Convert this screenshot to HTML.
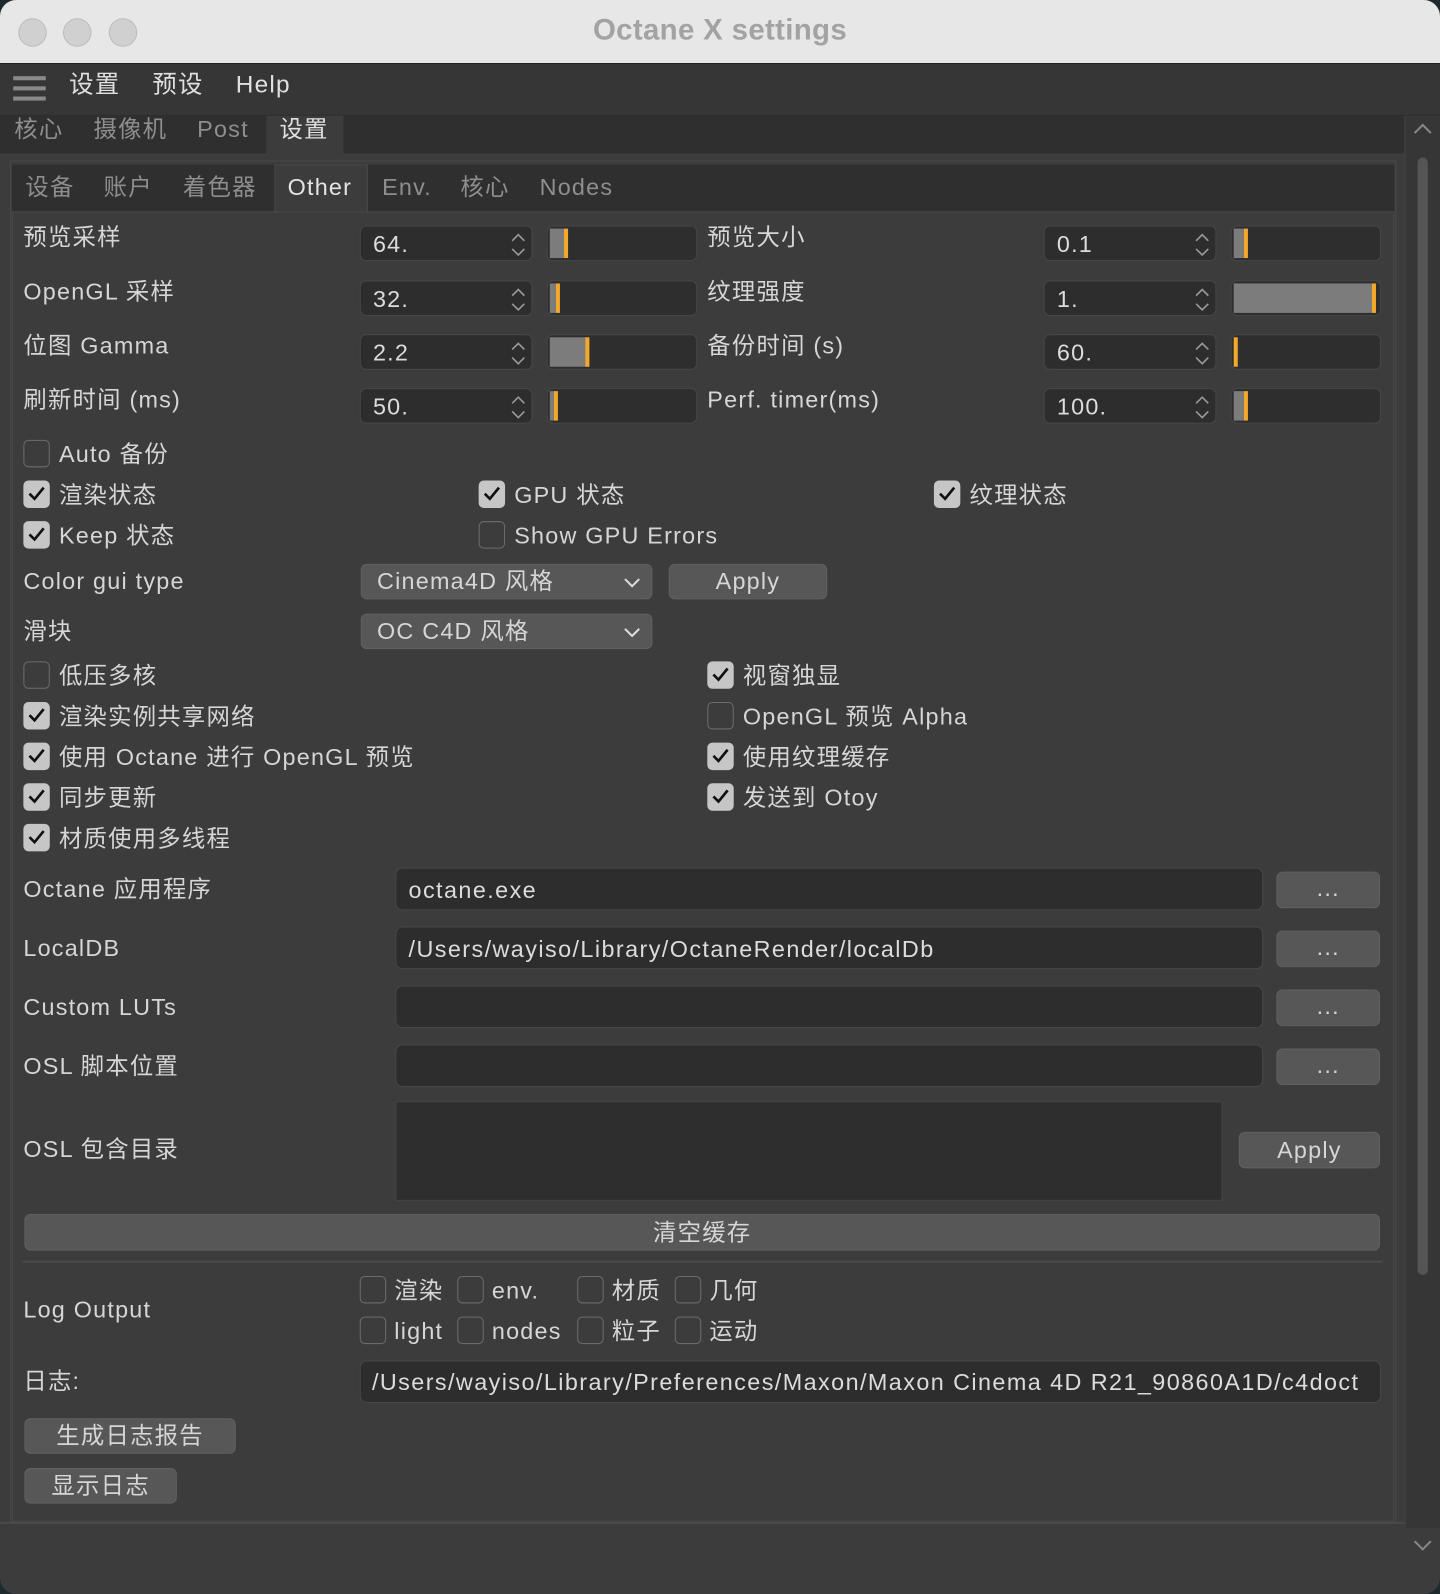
<!DOCTYPE html>
<html><head><meta charset="utf-8">
<style>
html,body{margin:0;padding:0;background:#1e2a2e;width:1440px;height:1594px;overflow:hidden}
#w{position:absolute;left:0;top:0;width:1417px;height:1569px;transform-origin:0 0;transform:scale(1.01623,1.01593);background:#3c3c3c;border-radius:16px;overflow:hidden;font-family:"Liberation Sans","Noto Sans CJK SC",sans-serif;letter-spacing:1.2px}
.a{position:absolute}
.t{position:absolute;font-size:23px;line-height:26px;color:#d6d6d6;white-space:nowrap}
.num{position:absolute;width:170px;height:35px;background:#2d2d2d;border:1px solid #474747;border-radius:6px;box-sizing:border-box}
.num span{position:absolute;left:12px;top:4px;font-size:23px;color:#dcdcdc}
.num svg{position:absolute;right:5px;top:5px}
.sl{position:absolute;width:148px;height:35px;background:#2e2e2e;border:1px solid #464646;border-radius:6px;box-sizing:border-box;overflow:hidden}
.sl i{position:absolute;left:2px;top:2px;bottom:2px;background:#7c7c7c}
.sl b{position:absolute;top:2px;bottom:2px;width:4px;background:#f2a82a}
.cb{position:absolute;width:26px;height:27px;border-radius:5px;box-sizing:border-box;border:1.5px solid #6c6c6c}
.cb.on{background:#c6c6c6;border-color:#c6c6c6}
.btn{position:absolute;background:#575757;border:1px solid #606060;border-radius:6px;box-sizing:border-box;color:#d6d6d6;font-size:23px;text-align:center}
.inp{position:absolute;background:#2d2d2d;border:1px solid #474747;border-radius:7px;box-sizing:border-box;color:#dcdcdc;font-size:23px;letter-spacing:1.4px}
</style></head><body>
<div id="w">
<div class="a" style="left:0;top:0;width:1417px;height:62px;background:#e7e7e7;border-bottom:1px solid #222"></div>
<div class="a" style="left:18px;top:18px;width:26px;height:26px;border-radius:50%;background:#d0d0d0;border:1px solid #bcbcbc"></div>
<div class="a" style="left:62px;top:18px;width:26px;height:26px;border-radius:50%;background:#d0d0d0;border:1px solid #bcbcbc"></div>
<div class="a" style="left:107px;top:18px;width:26px;height:26px;border-radius:50%;background:#d0d0d0;border:1px solid #bcbcbc"></div>
<div class="t" style="left:0;width:1417px;text-align:center;top:14px;font-size:29px;line-height:32px;font-weight:bold;color:#a3a3a3;letter-spacing:0.3px">Octane X settings</div>
<div class="a" style="left:0;top:63px;width:1417px;height:50px;background:#363636;border-bottom:2px solid #2e2e2e"></div>
<div class="a" style="left:13px;top:75px;width:32px;height:4px;background:#8a8a8a"></div>
<div class="a" style="left:13px;top:85px;width:32px;height:4px;background:#8a8a8a"></div>
<div class="a" style="left:13px;top:95px;width:32px;height:4px;background:#8a8a8a"></div>
<div class="t" style="left:68px;top:71px;font-size:24px;color:#e0e0e0">设置</div>
<div class="t" style="left:150px;top:71px;font-size:24px;color:#e0e0e0">预设</div>
<div class="t" style="left:232px;top:71px;font-size:24px;color:#e0e0e0">Help</div>
<div class="a" style="left:0;top:114px;width:1382px;height:37px;background:#2f2f2f"></div>
<div class="a" style="left:262px;top:114px;width:76px;height:37px;background:#3c3c3c"></div>
<div class="t" style="left:14px;top:114px;color:#8e8e8e">核心</div>
<div class="t" style="left:92px;top:114px;color:#8e8e8e">摄像机</div>
<div class="t" style="left:194px;top:114px;color:#8e8e8e">Post</div>
<div class="t" style="left:275px;top:114px;color:#e0e0e0">设置</div>
<div class="a" style="left:1382px;top:114px;width:35px;height:1390px;background:#363636;border-left:1px solid #444"></div>
<svg class="a" style="left:1390px;top:120px" width="20" height="14"><path d="M2 11 L10 3 L18 11" fill="none" stroke="#888" stroke-width="2"/></svg>
<div class="a" style="left:1395px;top:155px;width:10px;height:1100px;border-radius:5px;background:#555"></div>
<svg class="a" style="left:1390px;top:1514px" width="20" height="14"><path d="M2 3 L10 11 L18 3" fill="none" stroke="#888" stroke-width="2"/></svg>
<div class="a" style="left:10px;top:158px;width:1364px;height:1342px;border:1px solid #4a4a4a;box-sizing:border-box"></div>
<div class="a" style="left:12px;top:162px;width:1360px;height:46px;background:#2f2f2f"></div>
<div class="a" style="left:270px;top:162px;width:92px;height:48px;background:#3c3c3c;border:1px solid #484848;border-bottom:none;box-sizing:border-box"></div>
<div class="t" style="left:25px;top:171px;color:#8e8e8e">设备</div>
<div class="t" style="left:102px;top:171px;color:#8e8e8e">账户</div>
<div class="t" style="left:180px;top:171px;color:#8e8e8e">着色器</div>
<div class="t" style="left:283px;top:171px;color:#e4e4e4">Other</div>
<div class="t" style="left:376px;top:171px;color:#8e8e8e">Env.</div>
<div class="t" style="left:453px;top:171px;color:#8e8e8e">核心</div>
<div class="t" style="left:531px;top:171px;color:#8e8e8e">Nodes</div>
<div class="a" style="left:12px;top:208px;width:1360px;height:1290px;border:1px solid #484848;box-sizing:border-box"></div>

<div class="t" style="left:23px;top:220px">预览采样</div>
<div class="t" style="left:23px;top:274px">OpenGL 采样</div>
<div class="t" style="left:23px;top:327px">位图 Gamma</div>
<div class="t" style="left:23px;top:380px">刷新时间 (ms)</div>
<div class="t" style="left:696px;top:220px">预览大小</div>
<div class="t" style="left:696px;top:274px">纹理强度</div>
<div class="t" style="left:696px;top:327px">备份时间 (s)</div>
<div class="t" style="left:696px;top:380px">Perf. timer(ms)</div>

<div class="num" style="left:354px;top:222px"><span>64.</span><svg width="16" height="26"><path d="M2 9 L8 3 L14 9 M2 17 L8 23 L14 17" fill="none" stroke="#999" stroke-width="1.6"/></svg></div>
<div class="num" style="left:354px;top:276px"><span>32.</span><svg width="16" height="26"><path d="M2 9 L8 3 L14 9 M2 17 L8 23 L14 17" fill="none" stroke="#999" stroke-width="1.6"/></svg></div>
<div class="num" style="left:354px;top:329px"><span>2.2</span><svg width="16" height="26"><path d="M2 9 L8 3 L14 9 M2 17 L8 23 L14 17" fill="none" stroke="#999" stroke-width="1.6"/></svg></div>
<div class="num" style="left:354px;top:382px"><span>50.</span><svg width="16" height="26"><path d="M2 9 L8 3 L14 9 M2 17 L8 23 L14 17" fill="none" stroke="#999" stroke-width="1.6"/></svg></div>
<div class="num" style="left:1027px;top:222px"><span>0.1</span><svg width="16" height="26"><path d="M2 9 L8 3 L14 9 M2 17 L8 23 L14 17" fill="none" stroke="#999" stroke-width="1.6"/></svg></div>
<div class="num" style="left:1027px;top:276px"><span>1.</span><svg width="16" height="26"><path d="M2 9 L8 3 L14 9 M2 17 L8 23 L14 17" fill="none" stroke="#999" stroke-width="1.6"/></svg></div>
<div class="num" style="left:1027px;top:329px"><span>60.</span><svg width="16" height="26"><path d="M2 9 L8 3 L14 9 M2 17 L8 23 L14 17" fill="none" stroke="#999" stroke-width="1.6"/></svg></div>
<div class="num" style="left:1027px;top:382px"><span>100.</span><svg width="16" height="26"><path d="M2 9 L8 3 L14 9 M2 17 L8 23 L14 17" fill="none" stroke="#999" stroke-width="1.6"/></svg></div>

<div class="sl" style="left:538px;top:222px"><i style="width:14px"></i><b style="left:16px"></b></div>
<div class="sl" style="left:538px;top:276px"><i style="width:6px"></i><b style="left:8px"></b></div>
<div class="sl" style="left:538px;top:329px"><i style="width:36px"></i><b style="left:37px"></b></div>
<div class="sl" style="left:538px;top:382px"><i style="width:4px"></i><b style="left:6px"></b></div>
<div class="sl" style="left:1211px;top:222px"><i style="width:10px"></i><b style="left:12px"></b></div>
<div class="sl" style="left:1211px;top:276px"><i style="width:136px"></i><b style="left:138px"></b></div>
<div class="sl" style="left:1211px;top:329px"><b style="left:2px"></b></div>
<div class="sl" style="left:1211px;top:382px"><i style="width:10px"></i><b style="left:12px"></b></div>

<div class="cb" style="left:23px;top:433px"></div><div class="t" style="left:58px;top:434px">Auto 备份</div>
<div class="cb on" style="left:23px;top:473px"><svg width="24" height="24"><path d="M5 12 L10 17 L19 6" fill="none" stroke="#111" stroke-width="2.6"/></svg></div><div class="t" style="left:58px;top:474px">渲染状态</div>
<div class="cb on" style="left:471px;top:473px"><svg width="24" height="24"><path d="M5 12 L10 17 L19 6" fill="none" stroke="#111" stroke-width="2.6"/></svg></div><div class="t" style="left:506px;top:474px">GPU 状态</div>
<div class="cb on" style="left:919px;top:473px"><svg width="24" height="24"><path d="M5 12 L10 17 L19 6" fill="none" stroke="#111" stroke-width="2.6"/></svg></div><div class="t" style="left:954px;top:474px">纹理状态</div>
<div class="cb on" style="left:23px;top:513px"><svg width="24" height="24"><path d="M5 12 L10 17 L19 6" fill="none" stroke="#111" stroke-width="2.6"/></svg></div><div class="t" style="left:58px;top:514px">Keep 状态</div>
<div class="cb" style="left:471px;top:513px"></div><div class="t" style="left:506px;top:514px">Show GPU Errors</div>

<div class="t" style="left:23px;top:559px">Color gui type</div>
<div class="btn" style="left:355px;top:555px;width:287px;height:35px;text-align:left;padding-left:15px;line-height:33px">Cinema4D 风格<svg class="a" style="right:10px;top:12px" width="18" height="12"><path d="M2 2 L9 9 L16 2" fill="none" stroke="#ddd" stroke-width="2"/></svg></div>
<div class="btn" style="left:658px;top:555px;width:156px;height:35px;line-height:33px">Apply</div>
<div class="t" style="left:23px;top:608px">滑块</div>
<div class="btn" style="left:355px;top:604px;width:287px;height:35px;text-align:left;padding-left:15px;line-height:33px">OC C4D 风格<svg class="a" style="right:10px;top:12px" width="18" height="12"><path d="M2 2 L9 9 L16 2" fill="none" stroke="#ddd" stroke-width="2"/></svg></div>

<div class="cb" style="left:23px;top:651px"></div><div class="t" style="left:58px;top:652px">低压多核</div>
<div class="cb on" style="left:23px;top:691px"><svg width="24" height="24"><path d="M5 12 L10 17 L19 6" fill="none" stroke="#111" stroke-width="2.6"/></svg></div><div class="t" style="left:58px;top:692px">渲染实例共享网络</div>
<div class="cb on" style="left:23px;top:731px"><svg width="24" height="24"><path d="M5 12 L10 17 L19 6" fill="none" stroke="#111" stroke-width="2.6"/></svg></div><div class="t" style="left:58px;top:732px">使用 Octane 进行 OpenGL 预览</div>
<div class="cb on" style="left:23px;top:771px"><svg width="24" height="24"><path d="M5 12 L10 17 L19 6" fill="none" stroke="#111" stroke-width="2.6"/></svg></div><div class="t" style="left:58px;top:772px">同步更新</div>
<div class="cb on" style="left:23px;top:811px"><svg width="24" height="24"><path d="M5 12 L10 17 L19 6" fill="none" stroke="#111" stroke-width="2.6"/></svg></div><div class="t" style="left:58px;top:812px">材质使用多线程</div>
<div class="cb on" style="left:696px;top:651px"><svg width="24" height="24"><path d="M5 12 L10 17 L19 6" fill="none" stroke="#111" stroke-width="2.6"/></svg></div><div class="t" style="left:731px;top:652px">视窗独显</div>
<div class="cb" style="left:696px;top:691px"></div><div class="t" style="left:731px;top:692px">OpenGL 预览 Alpha</div>
<div class="cb on" style="left:696px;top:731px"><svg width="24" height="24"><path d="M5 12 L10 17 L19 6" fill="none" stroke="#111" stroke-width="2.6"/></svg></div><div class="t" style="left:731px;top:732px">使用纹理缓存</div>
<div class="cb on" style="left:696px;top:771px"><svg width="24" height="24"><path d="M5 12 L10 17 L19 6" fill="none" stroke="#111" stroke-width="2.6"/></svg></div><div class="t" style="left:731px;top:772px">发送到 Otoy</div>

<div class="t" style="left:23px;top:862px">Octane 应用程序</div>
<div class="inp" style="left:389px;top:854px;width:854px;height:42px;padding:8px 12px">octane.exe</div>
<div class="btn" style="left:1256px;top:858px;width:102px;height:36px;line-height:30px">...</div>
<div class="t" style="left:23px;top:920px">LocalDB</div>
<div class="inp" style="left:389px;top:912px;width:854px;height:42px;padding:8px 12px">/Users/wayiso/Library/OctaneRender/localDb</div>
<div class="btn" style="left:1256px;top:916px;width:102px;height:36px;line-height:30px">...</div>
<div class="t" style="left:23px;top:978px">Custom LUTs</div>
<div class="inp" style="left:389px;top:970px;width:854px;height:42px"></div>
<div class="btn" style="left:1256px;top:974px;width:102px;height:36px;line-height:30px">...</div>
<div class="t" style="left:23px;top:1036px">OSL 脚本位置</div>
<div class="inp" style="left:389px;top:1028px;width:854px;height:42px"></div>
<div class="btn" style="left:1256px;top:1032px;width:102px;height:36px;line-height:30px">...</div>
<div class="t" style="left:23px;top:1118px">OSL 包含目录</div>
<div class="a" style="left:389px;top:1084px;width:814px;height:98px;background:#2e2e2e;border:1px solid #474747;box-sizing:border-box"></div>
<div class="btn" style="left:1219px;top:1114px;width:139px;height:36px;line-height:34px">Apply</div>
<div class="btn" style="left:24px;top:1195px;width:1334px;height:36px;line-height:34px">清空缓存</div>
<div class="a" style="left:22px;top:1241px;width:1338px;height:2px;background:#4a4a4a"></div>

<div class="t" style="left:23px;top:1276px">Log Output</div>
<div class="cb" style="left:354px;top:1256px"></div><div class="t" style="left:388px;top:1257px">渲染</div>
<div class="cb" style="left:450px;top:1256px"></div><div class="t" style="left:484px;top:1257px">env.</div>
<div class="cb" style="left:568px;top:1256px"></div><div class="t" style="left:602px;top:1257px">材质</div>
<div class="cb" style="left:664px;top:1256px"></div><div class="t" style="left:698px;top:1257px">几何</div>
<div class="cb" style="left:354px;top:1296px"></div><div class="t" style="left:388px;top:1297px">light</div>
<div class="cb" style="left:450px;top:1296px"></div><div class="t" style="left:484px;top:1297px">nodes</div>
<div class="cb" style="left:568px;top:1296px"></div><div class="t" style="left:602px;top:1297px">粒子</div>
<div class="cb" style="left:664px;top:1296px"></div><div class="t" style="left:698px;top:1297px">运动</div>
<div class="t" style="left:23px;top:1346px">日志:</div>
<div class="inp" style="left:354px;top:1339px;width:1005px;height:42px;padding:7px 11px;white-space:nowrap;overflow:hidden">/Users/wayiso/Library/Preferences/Maxon/Maxon Cinema 4D R21_90860A1D/c4doct</div>
<div class="btn" style="left:24px;top:1396px;width:208px;height:35px;line-height:33px">生成日志报告</div>
<div class="btn" style="left:24px;top:1445px;width:150px;height:35px;line-height:33px">显示日志</div>
<div class="a" style="left:0;top:1498px;width:1382px;height:2px;background:#4a4a4a"></div>
</div>
</body></html>
